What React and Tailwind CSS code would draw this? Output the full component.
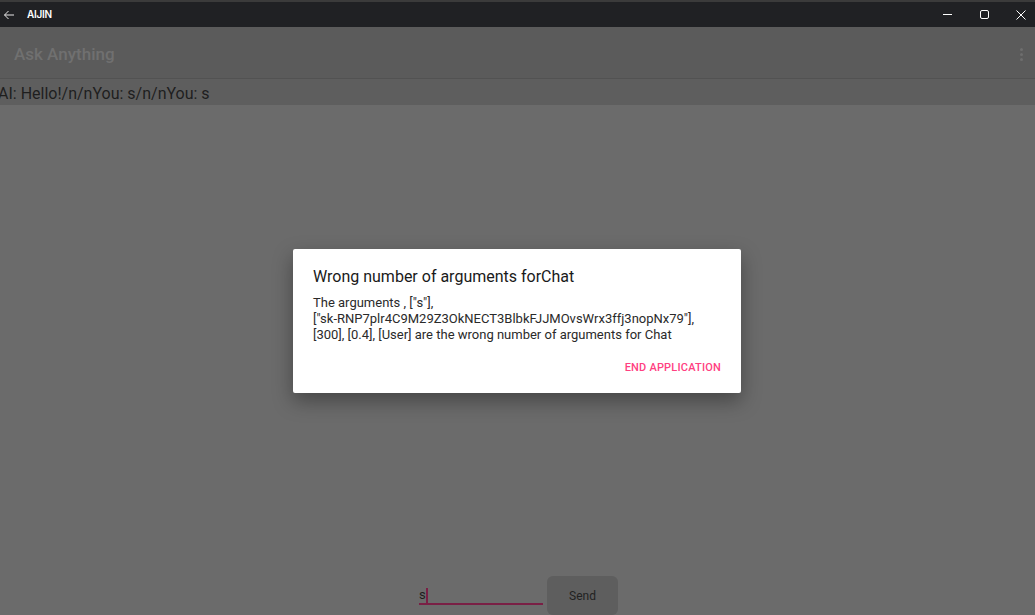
import React from 'react';

const TitleBar = () => (
  <div className="h-[27px] bg-[#202124] border-t-2 border-[#3b3b3b] flex items-center text-white">
    <svg width="12" height="12" viewBox="0 0 12 12" className="ml-[3px]" fill="none" stroke="#e8e8e8" strokeWidth="1">
      <path d="M11 6H1.5M5.5 2L1.5 6l4 4" />
    </svg>
    <span className="ml-[12px] text-[10px] font-semibold tracking-tight" style={{ fontFamily: 'Inter, sans-serif' }}>AIJIN</span>
    <div className="ml-auto flex items-center gap-[27px] mr-[9px]">
      <div className="w-[10px] h-[10px] flex items-center justify-center">
        <div className="w-[9px] h-px bg-white" />
      </div>
      <div className="w-[10px] h-[10px] flex items-center justify-center">
        <div className="w-[9px] h-[9px] border border-white rounded-[2px]" />
      </div>
      <div className="w-[10px] h-[10px] flex items-center justify-center">
        <svg width="10" height="10" viewBox="0 0 10 10" stroke="white" strokeWidth="1">
          <path d="M0.5 0.5l9 9M9.5 0.5l-9 9" />
        </svg>
      </div>
    </div>
  </div>
);

export default function App() {
  return (
    <div className="w-[1035px] h-[615px] overflow-hidden flex flex-col bg-[#6b6b6b] relative" style={{ fontFamily: 'Roboto, "Liberation Sans", sans-serif' }}>
      <TitleBar />
      <div className="h-[52px] bg-[#5b5b5b] flex items-center px-[14px] pt-[4px] border-b border-[#525252]">
        <span className="text-[17px] text-[#707070] font-medium">Ask Anything</span>
        <div className="ml-auto flex flex-col gap-[2px] mr-[-2px]">
          <div className="w-[3px] h-[3px] rounded-full bg-[#6e6e6e]" />
          <div className="w-[3px] h-[3px] rounded-full bg-[#6e6e6e]" />
          <div className="w-[3px] h-[3px] rounded-full bg-[#6e6e6e]" />
        </div>
      </div>
      <div className="h-[26px] bg-[#5e5e5e] flex items-center pt-[3px]">
        <span className="text-[16px] text-[#1e1e1e] ml-[-2px] whitespace-nowrap">AI: Hello!/n/nYou: s/n/nYou: s</span>
      </div>
      <div className="flex-1" />
      <div className="h-[39px] flex justify-center items-start gap-[4px] pl-[2px]">
        <div className="w-[124px] h-[29px] relative flex items-end">
          <span className="text-[13px] leading-[16px] text-[#1e1e1e] mb-[2px]">s</span>
          <div className="w-[2px] h-[16px] bg-[#7a1f45] mb-[1px]" />
          <div className="absolute bottom-0 left-0 right-0 h-[2px] bg-[#7a1f45]" />
        </div>
        <div className="w-[71px] h-[39px] rounded-[6px] bg-[#5e5e5e] flex items-center justify-center text-[12px] text-[#222]">Send</div>
      </div>

      <div className="absolute left-[293px] top-[249px] w-[448px] h-[144px] bg-white rounded-[2px] shadow-[0_8px_20px_rgba(0,0,0,0.35)] px-[20px] pt-[16px]">
        <div className="text-[16px] leading-[24px] text-[#1a1a1a]">Wrong number of arguments forChat</div>
        <div className="mt-[6px] text-[13px] leading-[16px] text-[#2a2a2a]">
          The arguments , ["s"],<br />
          ["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"],<br />
          [300], [0.4], [User] are the wrong number of arguments for Chat
        </div>
        <div className="flex justify-end mt-[17px]">
          <span className="text-[11px] leading-[16px] font-medium text-[#ff4081] tracking-[0.2px]">END APPLICATION</span>
        </div>
      </div>
    </div>
  );
}
